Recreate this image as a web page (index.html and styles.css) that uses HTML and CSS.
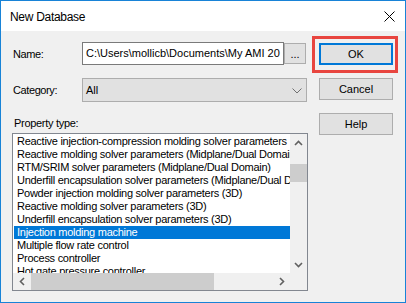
FILE: index.html
```html
<!DOCTYPE html>
<html lang="en">
<head>
  <meta charset="UTF-8" />
  <title>New Database</title>
  <link rel="stylesheet" href="styles.css">
</head>
<body>
  <div class="window">
    <div class="titlebar">
      <span class="title">New Database</span>
      <svg class="close" width="11" height="11" viewBox="0 0 11 11">
        <path d="M0.5 0.5 L10.5 10.5 M10.5 0.5 L0.5 10.5" stroke="#000" stroke-width="1" fill="none"/>
      </svg>
    </div>

    <div class="content">
      <div class="left">
        <div class="field-row">
          <span class="label">Name:</span>
          <div class="textbox">C:\Users\mollicb\Documents\My AMI 20</div>
          <div class="browse-btn">...</div>
        </div>
        <div class="field-row cat-row">
          <span class="label">Category:</span>
          <div class="combo">
            <span>All</span>
            <svg width="10" height="6" viewBox="0 0 10 6">
              <path d="M0.5 0.5 L5 5 L9.5 0.5" stroke="#707070" stroke-width="1" fill="none"/>
            </svg>
          </div>
        </div>
        <div class="prop-label">Property type:</div>

        <div class="listbox">
          <div class="items">
            <div class="item">Reactive injection-compression molding solver parameters</div>
            <div class="item">Reactive molding solver parameters (Midplane/Dual Domain)</div>
            <div class="item">RTM/SRIM solver parameters (Midplane/Dual Domain)</div>
            <div class="item">Underfill encapsulation solver parameters (Midplane/Dual Domain)</div>
            <div class="item">Powder injection molding solver parameters (3D)</div>
            <div class="item">Reactive molding solver parameters (3D)</div>
            <div class="item">Underfill encapsulation solver parameters (3D)</div>
            <div class="item selected">Injection molding machine</div>
            <div class="item">Multiple flow rate control</div>
            <div class="item">Process controller</div>
            <div class="item">Hot gate pressure controller</div>
          </div>
          <div class="vscroll">
            <div class="sb-btn">
              <svg width="9" height="6" viewBox="0 0 9 6"><path d="M1 5 L4.5 1.5 L8 5" stroke="#606060" stroke-width="1.6" fill="none"/></svg>
            </div>
            <div class="v-gap"></div>
            <div class="v-thumb"></div>
            <div class="sb-fill"></div>
            <div class="sb-btn">
              <svg width="9" height="6" viewBox="0 0 9 6"><path d="M1 1 L4.5 4.5 L8 1" stroke="#606060" stroke-width="1.6" fill="none"/></svg>
            </div>
          </div>
          <div class="hscroll">
            <div class="sb-btn">
              <svg width="6" height="9" viewBox="0 0 6 9"><path d="M5 1 L1.5 4.5 L5 8" stroke="#606060" stroke-width="1.6" fill="none"/></svg>
            </div>
            <div class="h-thumb"></div>
            <div class="sb-fill"></div>
            <div class="sb-btn">
              <svg width="6" height="9" viewBox="0 0 6 9"><path d="M1 1 L4.5 4.5 L1 8" stroke="#606060" stroke-width="1.6" fill="none"/></svg>
            </div>
          </div>
          <div class="corner"></div>
        </div>
      </div>

      <div class="buttons">
        <div class="btn btn-default">OK</div>
        <div class="btn">Cancel</div>
        <div class="btn">Help</div>
      </div>
    </div>

    <div class="mark-box"></div>
  </div>
</body>
</html>
```

FILE: styles.css
```css
* { box-sizing: border-box; }
html, body {
  margin: 0;
  padding: 0;
}
body {
  font-family: "Liberation Sans", Arial, sans-serif;
  font-size: 11px;
  color: #000;
  background: #f0f0f0;
}

.window {
  position: relative;
  width: 406px;
  height: 303px;
  border: 1px solid #1883d7;
  background: #f0f0f0;
  display: flex;
  flex-direction: column;
}

.titlebar {
  height: 30px;
  background: #fff;
  display: flex;
  align-items: center;
  justify-content: space-between;
  padding: 0 10px 0 9px;
}
.title {
  font-size: 12px;
  letter-spacing: -0.3px;
  margin-top: 1px;
}
.close {
  display: block;
  margin-top: 1px;
}

.content {
  display: flex;
  padding: 11px 0 0 11px;
  gap: 11px;
}

.left {
  width: 296px;
  display: flex;
  flex-direction: column;
}

.field-row {
  display: flex;
  align-items: flex-start;
}
.label {
  width: 70px;
  padding-left: 1px;
  letter-spacing: -0.4px;
  align-self: center;
}
.textbox {
  width: 202px;
  height: 23px;
  background: #fff;
  border: 1px solid #7a7a7a;
  padding-left: 3px;
  line-height: 21px;
  white-space: nowrap;
  overflow: hidden;
}
.browse-btn {
  width: 22px;
  height: 21px;
  margin: 1px 0 0 0;
  background: #e1e1e1;
  border: 1px solid #adadad;
  text-align: center;
  line-height: 20px;
}

.cat-row {
  margin-top: 13px;
}
.combo {
  width: 225px;
  height: 24px;
  background: #e1e1e1;
  border: 1px solid #adadad;
  display: flex;
  align-items: center;
  justify-content: space-between;
  padding: 0 4px 0 3px;
}
.combo svg {
  display: block;
  margin-top: 1px;
}

.prop-label {
  margin-top: 14px;
  height: 14px;
  line-height: 14px;
  padding-left: 2px;
  letter-spacing: -0.3px;
  margin-bottom: 3px;
}

.listbox {
  width: 296px;
  height: 158px;
  border: 1px solid #828790;
  background: #fff;
  display: grid;
  grid-template-columns: 1fr 17px;
  grid-template-rows: 1fr 17px;
}
.items {
  overflow: hidden;
  padding: 1px 0 0 1px;
}
.item {
  height: 13px;
  line-height: 13px;
  padding-left: 3px;
  white-space: nowrap;
  overflow: hidden;
  letter-spacing: -0.27px;
}
.item.selected {
  background: #0078d7;
  color: #fff;
}

.vscroll, .hscroll, .corner {
  background: #f0f0f0;
}
.vscroll {
  display: flex;
  flex-direction: column;
}
.hscroll {
  display: flex;
}
.sb-btn {
  width: 17px;
  height: 17px;
  display: flex;
  align-items: center;
  justify-content: center;
  flex-shrink: 0;
}
.v-gap {
  height: 13px;
}
.v-thumb {
  height: 18px;
  background: #cdcdcd;
}
.sb-fill {
  flex: 1;
}
.h-thumb {
  width: 183px;
  margin-left: 1px;
  background: #cdcdcd;
}

.buttons {
  padding-top: 1px;
  display: flex;
  flex-direction: column;
  gap: 13px;
}
.btn {
  width: 74px;
  height: 22px;
  background: #e1e1e1;
  border: 1px solid #adadad;
  text-align: center;
  line-height: 20px;
}
.btn-default {
  border: 2px solid #0078d7;
  line-height: 18px;
}

/* annotation around the OK button */
.mark-box {
  position: absolute;
  left: 311px;
  top: 35px;
  width: 86px;
  height: 37px;
  border: 3px solid #e8453f;
}
```
